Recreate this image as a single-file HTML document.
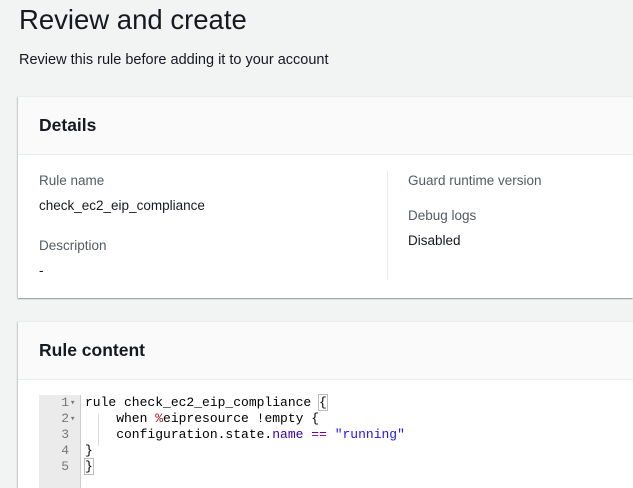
<!DOCTYPE html>
<html style="width:633px;height:488px;overflow:hidden"><head><meta charset="utf-8"><style>
*{margin:0;padding:0;box-sizing:border-box}
body{width:633px;height:488px;overflow:hidden;background:#f2f3f3;font-family:"Liberation Sans",sans-serif;color:#16191f;position:relative}
.abs{position:absolute}
h1{position:absolute;left:19px;top:4px;font-size:27.5px;font-weight:400;color:#16191f}
.sub{left:19px;top:52px;font-size:14.5px}
.card{position:absolute;left:18px;width:615px;background:#fff;box-shadow:0 1px 1px rgba(0,28,36,.3),-1px 1px 1px rgba(0,28,36,.15);border-top:1px solid #eaeded}
.hd{background:#fafafa;border-bottom:1px solid #eaeded;position:relative}
.hd span{position:absolute;left:21px;font-size:17.5px;font-weight:700}
.lbl{font-size:13.5px;color:#545b64}
.val{font-size:13.5px;color:#16191f}
.code{font-family:"Liberation Mono","DejaVu Sans Mono",monospace;font-size:13px;line-height:16px}
</style></head><body>
<h1>Review and create</h1>
<div class="abs sub">Review this rule before adding it to your account</div>

<div class="card" style="top:96px;height:202px">
 <div class="hd" style="height:58px"><span style="top:18px">Details</span></div>
 <div class="abs lbl" style="left:21px;top:76px">Rule name</div>
 <div class="abs val" style="left:21px;top:101px">check_ec2_eip_compliance</div>
 <div class="abs lbl" style="left:21px;top:141px">Description</div>
 <div class="abs val" style="left:21px;top:166px">-</div>
 <div class="abs" style="left:369px;top:74px;width:1px;height:109px;background:#eaeded"></div>
 <div class="abs lbl" style="left:390px;top:76px">Guard runtime version</div>
 <div class="abs lbl" style="left:390px;top:111px">Debug logs</div>
 <div class="abs val" style="left:390px;top:136px">Disabled</div>
</div>

<div class="card" style="top:321px;height:167px">
 <div class="hd" style="height:58px"><span style="top:18px">Rule content</span></div>
</div>
<div class="abs" style="left:39px;top:395px;width:41px;height:93px;background:#ebebeb"></div>
<div class="abs" style="left:80px;top:395px;width:1px;height:93px;background:#ccc"></div>
<div class="abs code" style="left:39px;top:395px;width:30px;text-align:right;color:#777">1<br>2<br>3<br>4<br>5</div>
<div class="abs code" style="left:70px;top:395px;color:#777;font-size:9px;line-height:16px">▾<br>▾</div>
<div class="abs" style="left:98px;top:414px;width:1px;height:32px;background:#ddd"></div>
<div class="abs code" style="left:85px;top:395px;white-space:pre;color:#000">rule check_ec2_eip_compliance <span style="outline:1px solid #bbb">{</span>
    when <span style="color:#a11">%</span>eipresource !empty {
    configuration.state.<span style="color:#30a">name</span> <span style="color:#708">==</span> <span style="color:#21f">"running"</span>
}
<span style="outline:1px solid #bbb">}</span></div>
</body></html>
